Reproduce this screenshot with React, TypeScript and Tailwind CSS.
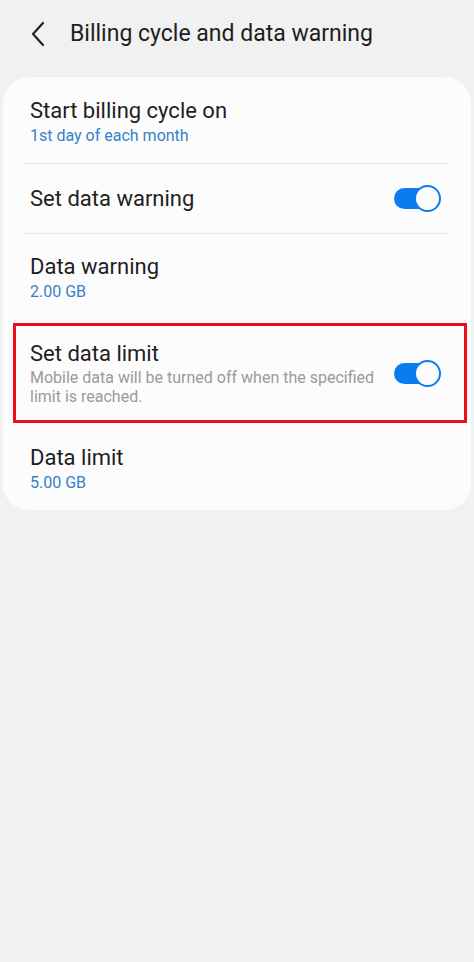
import React from "react";

function Toggle() {
  return (
    <div className="relative w-[47px] h-[27px] shrink-0">
      <div className="absolute left-0 top-[3px] w-[40px] h-[21px] rounded-full bg-[#0a7cf0]" />
      <div className="absolute right-0 top-0 w-[27px] h-[27px] rounded-full bg-[#fcfcfc] border-2 border-[#0a7cf0]" />
    </div>
  );
}

function Divider() {
  return <div className="ml-[21px] mr-[22px] h-px bg-[#e6e6e6]" />;
}

export default function App() {
  const font = { fontFamily: "Roboto, 'Noto Sans', Arial, sans-serif" };
  return (
    <div className="w-[474px] h-[962px] bg-[#f1f1f1] flex flex-col" style={font}>
      <div className="h-[77px] flex items-center pl-[30px] pb-[9px]">
        <svg width="18" height="26" viewBox="0 0 18 26" className="shrink-0">
          <path d="M13 2 L3 13 L13 24" fill="none" stroke="#222" strokeWidth="2.2" strokeLinecap="round" strokeLinejoin="round" />
        </svg>
        <div className="ml-[22px] text-[23px] text-[#1e1e1e]">Billing cycle and data warning</div>
      </div>
      <div className="mx-[3px] rounded-[26px] bg-[#fcfcfc] flex flex-col">
        <div className="h-[86px] flex flex-col justify-center px-[27px] pt-[4px]">
          <div className="text-[22px] leading-[27px] text-[#1e1e1e]">Start billing cycle on</div>
          <div className="text-[16px] leading-[23px] text-[#3581c8]">1st day of each month</div>
        </div>
        <Divider />
        <div className="h-[69px] flex items-center justify-between pl-[27px] pr-[30px]">
          <div className="text-[22px] leading-[27px] text-[#1e1e1e]">Set data warning</div>
          <Toggle />
        </div>
        <Divider />
        <div className="h-[86px] flex flex-col justify-center px-[27px] pt-[2px]">
          <div className="text-[22px] leading-[27px] text-[#1e1e1e]">Data warning</div>
          <div className="text-[16px] leading-[24px] text-[#3581c8]">2.00 GB</div>
        </div>
        <div className="relative h-[106px] flex items-center justify-between pl-[27px] pr-[30px]">
          <div className="flex flex-col w-[345px]">
            <div className="text-[22px] leading-[27px] text-[#1e1e1e]">Set data limit</div>
            <div className="text-[16px] leading-[19px] text-[#9a9a9a] mt-[1px]">
              Mobile data will be turned off when the specified limit is reached.
            </div>
          </div>
          <Toggle />
          <div className="absolute left-[10px] right-[4px] top-[3px] bottom-[3px] border-[3px] border-[#e8101a]" />
        </div>
        <div className="h-[84px] flex flex-col justify-center px-[27px] pt-[2px]">
          <div className="text-[22px] leading-[27px] text-[#1e1e1e]">Data limit</div>
          <div className="text-[16px] leading-[24px] text-[#3581c8]">5.00 GB</div>
        </div>
      </div>
    </div>
  );
}
